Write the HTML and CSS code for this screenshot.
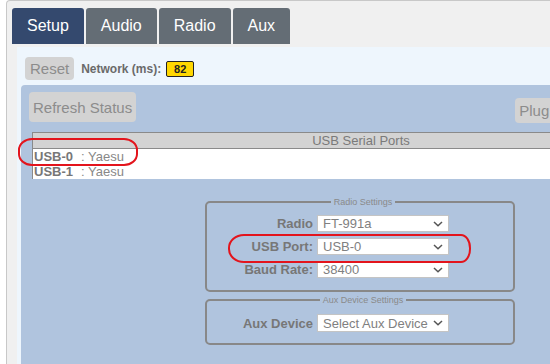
FILE: index.html
```html
<!DOCTYPE html>
<html lang="en">
<head>
  <meta charset="UTF-8">
  <meta name="viewport" content="width=device-width, initial-scale=1.0">
  <title>Radio Setup</title>
  <link rel="stylesheet" href="styles.css">
</head>
<body>
  <div class="frame">
    <!-- tabs -->
    <div class="nav-tabs">
      <button class="tab-button active">Setup</button>
      <button class="tab-button">Audio</button>
      <button class="tab-button">Radio</button>
      <button class="tab-button">Aux</button>
    </div>

    <div class="tab-content">
      <div class="status-bar">
        <button class="btn btn-reset">Reset</button>
        <span class="net-label">Network (ms):</span>
        <span class="badge">82</span>
      </div>

      <div class="setup-panel">
        <div class="button-row">
          <button class="btn btn-refresh">Refresh Status</button>
          <button class="btn btn-plug">Plug</button>
        </div>

        <!-- USB serial ports -->
        <div class="ports">
          <div class="ports-head">USB Serial Ports</div>
          <div class="ports-row"><span class="port-name">USB-0</span><span class="port-desc">: Yaesu</span></div>
          <div class="ports-row"><span class="port-name">USB-1</span><span class="port-desc">: Yaesu</span></div>
        </div>

        <fieldset class="settings">
          <legend>Radio Settings</legend>
          <div class="form-grid">
            <label>Radio</label>
            <div class="select"><span>FT-991a</span><svg width="10" height="6" viewBox="0 0 10 6"><path d="M1 1 L5 4.8 L9 1" fill="none" stroke="#555" stroke-width="1.5"/></svg></div>
            <label>USB Port:</label>
            <div class="select"><span>USB-0</span><svg width="10" height="6" viewBox="0 0 10 6"><path d="M1 1 L5 4.8 L9 1" fill="none" stroke="#555" stroke-width="1.5"/></svg></div>
            <label>Baud Rate:</label>
            <div class="select"><span>38400</span><svg width="10" height="6" viewBox="0 0 10 6"><path d="M1 1 L5 4.8 L9 1" fill="none" stroke="#555" stroke-width="1.5"/></svg></div>
          </div>
        </fieldset>

        <fieldset class="settings aux">
          <legend>Aux Device Settings</legend>
          <div class="form-grid">
            <label>Aux Device</label>
            <div class="select tall"><span>Select Aux Device</span><svg width="10" height="6" viewBox="0 0 10 6"><path d="M1 1 L5 4.8 L9 1" fill="none" stroke="#555" stroke-width="1.5"/></svg></div>
          </div>
        </fieldset>
      </div>
    </div>
  </div>

  <!-- red annotation marks -->
  <div class="mark mark-port"></div>
  <div class="mark mark-usb"></div>
</body>
</html>
```

FILE: styles.css
```css
/* base */
html, body {
  margin: 0;
  padding: 0;
  height: 100%;
  overflow: hidden;
  background: #fff;
  font-family: "Liberation Sans", Arial, sans-serif;
}
.frame {
  margin-left: 6px;
  width: 544px;
  height: 100vh;
  overflow: hidden;
  display: flex;
  flex-direction: column;
  border-left: 1px solid #c8c8c8;
  border-top: 1px solid #c8c8c8;
  border-top-left-radius: 4px;
  background: #f0f0f0;
  padding: 7px 0 0 5px;
  box-sizing: border-box;
}
/* tabs */
.nav-tabs {
  display: flex;
  gap: 2px;
}
.tab-button {
  height: 36px;
  padding: 0 15px;
  border: none;
  border-radius: 3px 3px 0 0;
  background: #646d75;
  color: #fff;
  font-family: inherit;
  font-size: 16px;
}
.tab-button.active {
  background: #34496e;
}
.tab-content {
  flex: 1;
  display: flex;
  flex-direction: column;
  margin: 3px 0 0 5px;
  background: #eef6fd;
  padding: 10px 0 0 4px;
}
/* buttons */
.btn {
  border: none;
  border-radius: 4px;
  background: #d3d3d3;
  color: #8c8c8c;
  font-family: inherit;
  font-size: 15px;
  padding: 0 4px;
  white-space: nowrap;
}
.status-bar {
  display: flex;
  align-items: center;
  height: 23px;
}
.btn-reset {
  height: 23px;
  margin-left: 4px;
  padding: 0 5px;
}
.net-label {
  margin-left: 7px;
  font-size: 12px;
  font-weight: bold;
  color: #6a6a6a;
}
.badge {
  margin-left: 5px;
  width: 26px;
  height: 14px;
  line-height: 14px;
  text-align: center;
  background: #ffd700;
  border: 1px solid #222;
  border-radius: 2px;
  font-size: 11px;
  font-weight: bold;
  color: #222;
}
/* main panel */
.setup-panel {
  flex: 1;
  margin-top: 5px;
  background: #b0c4de;
  border-top-left-radius: 4px;
  padding: 7px 0 0 8px;
}
.button-row {
  display: flex;
  align-items: flex-end;
}
.btn-refresh {
  height: 30px;
}
.btn-plug {
  flex-shrink: 0;
  height: 25px;
  margin-left: 379px;
  margin-bottom: -1px;
}
/* ports table */
.ports {
  margin: 10px 0 0 3px;
  width: 656px;
  border-left: 1px solid #8a8a8a;
  font-size: 13px;
}
.ports-head {
  height: 15px;
  line-height: 15px;
  background: #d3d3d3;
  border-top: 1px solid #8a8a8a;
  border-bottom: 1px solid #8a8a8a;
  text-align: center;
  color: #7a7a7a;
}
.ports-row {
  height: 15px;
  line-height: 15px;
  background: #fff;
  color: #888;
}
.port-name {
  display: inline-block;
  width: 47px;
  padding-left: 1px;
  font-weight: bold;
  color: #777;
}
/* fieldsets */
.settings {
  margin: 18px 0 0 176px;
  width: 310px;
  box-sizing: border-box;
  border: 2px solid #888;
  border-radius: 5px;
  padding: 8px 0 12px 6px;
}
.settings legend {
  margin: 0 auto;
  padding: 0 3px;
  font-size: 9px;
  color: #8a8a8a;
}
.settings.aux {
  margin-top: 3px;
  padding: 9px 0 11px 6px;
}
.form-grid {
  display: grid;
  grid-template-columns: 100px 132px;
  column-gap: 4px;
  row-gap: 6px;
  align-items: center;
}
.form-grid label {
  text-align: right;
  font-size: 13px;
  font-weight: bold;
  color: #777;
}
.select {
  display: flex;
  align-items: center;
  justify-content: space-between;
  height: 17px;
  box-sizing: border-box;
  padding: 0 5px 0 5px;
  background: #fff;
  border: 1px solid #c4c4c4;
  font-size: 13px;
  color: #808080;
}
.select.tall {
  height: 18px;
}
/* red annotation marks */
.mark {
  position: absolute;
  border: 2px solid #e3141c;
  box-sizing: border-box;
}
.mark-usb {
  left: 18px;
  top: 138px;
  width: 120px;
  height: 28px;
  border-radius: 14px / 12px;
}
.mark-port {
  left: 228px;
  top: 234px;
  width: 243px;
  height: 29px;
  border-radius: 16px 10px 10px 16px / 14px;
}
```
